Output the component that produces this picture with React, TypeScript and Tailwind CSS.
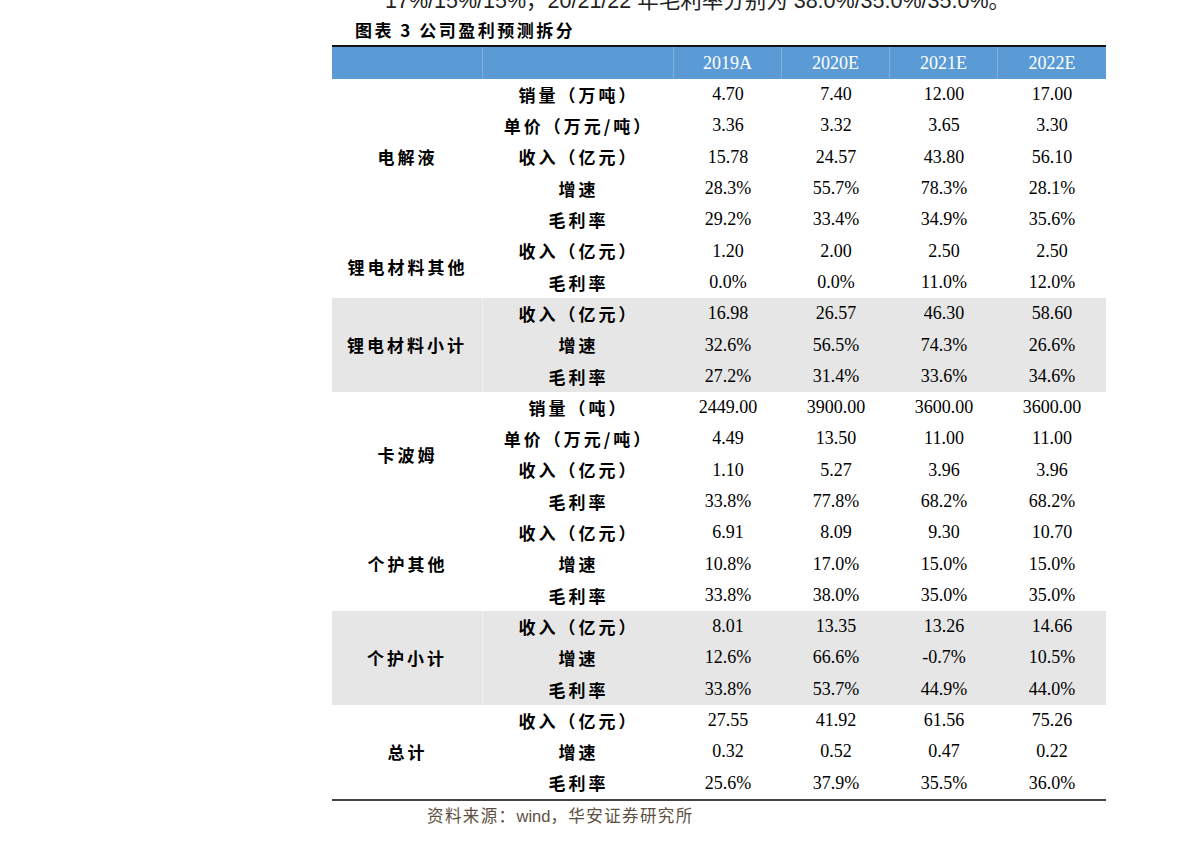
const cjk = "font-['Noto_Sans_CJK_SC',sans-serif]";
const serif = "font-['Liberation_Serif','Noto_Sans_CJK_SC',serif]";

type Row = [string, string, string, string, string];

const groups: { name: string; shaded?: boolean; rows: Row[] }[] = [
  {
    name: "电解液",
    rows: [
      ["销量（万吨）", "4.70", "7.40", "12.00", "17.00"],
      ["单价（万元/吨）", "3.36", "3.32", "3.65", "3.30"],
      ["收入（亿元）", "15.78", "24.57", "43.80", "56.10"],
      ["增速", "28.3%", "55.7%", "78.3%", "28.1%"],
      ["毛利率", "29.2%", "33.4%", "34.9%", "35.6%"],
    ],
  },
  {
    name: "锂电材料其他",
    rows: [
      ["收入（亿元）", "1.20", "2.00", "2.50", "2.50"],
      ["毛利率", "0.0%", "0.0%", "11.0%", "12.0%"],
    ],
  },
  {
    name: "锂电材料小计",
    shaded: true,
    rows: [
      ["收入（亿元）", "16.98", "26.57", "46.30", "58.60"],
      ["增速", "32.6%", "56.5%", "74.3%", "26.6%"],
      ["毛利率", "27.2%", "31.4%", "33.6%", "34.6%"],
    ],
  },
  {
    name: "卡波姆",
    rows: [
      ["销量（吨）", "2449.00", "3900.00", "3600.00", "3600.00"],
      ["单价（万元/吨）", "4.49", "13.50", "11.00", "11.00"],
      ["收入（亿元）", "1.10", "5.27", "3.96", "3.96"],
      ["毛利率", "33.8%", "77.8%", "68.2%", "68.2%"],
    ],
  },
  {
    name: "个护其他",
    rows: [
      ["收入（亿元）", "6.91", "8.09", "9.30", "10.70"],
      ["增速", "10.8%", "17.0%", "15.0%", "15.0%"],
      ["毛利率", "33.8%", "38.0%", "35.0%", "35.0%"],
    ],
  },
  {
    name: "个护小计",
    shaded: true,
    rows: [
      ["收入（亿元）", "8.01", "13.35", "13.26", "14.66"],
      ["增速", "12.6%", "66.6%", "-0.7%", "10.5%"],
      ["毛利率", "33.8%", "53.7%", "44.9%", "44.0%"],
    ],
  },
  {
    name: "总计",
    rows: [
      ["收入（亿元）", "27.55", "41.92", "61.56", "75.26"],
      ["增速", "0.32", "0.52", "0.47", "0.22"],
      ["毛利率", "25.6%", "37.9%", "35.5%", "36.0%"],
    ],
  },
];

const cols = "grid grid-cols-[191px_108px_108px_108px_108px]";

export default function App() {
  return (
    <div className="w-[1191px] h-[844px] bg-white overflow-hidden">
      {/* paragraph line cut off by the top edge */}
      <p className="mt-[-9px] ml-[385px] h-[20px] leading-[20px] text-[21.5px] text-[#222] font-['Liberation_Sans','Noto_Sans_CJK_SC',sans-serif] whitespace-nowrap">
        17%/15%/15%，20/21/22 年毛利率分别为 38.0%/35.0%/35.0%。
      </p>

      <div className="ml-[332px] w-[774px]">
        <h3 className={`mt-[8px] ml-[23px] h-[22px] leading-[22px] text-[17px] font-bold tracking-[2.5px] text-black ${cjk}`}>
          图表 3 公司盈利预测拆分
        </h3>

        {/* header */}
        <div className="mt-[4px] border-t-2 border-[#111] flex h-[34px] bg-[#5b9bd5] text-white">
          <div className="w-[151px] border-r border-[#7fb0de]" />
          <div className={`${cols} flex-1 items-center text-[18px] ${serif}`}>
            <div className="border-r border-[#7fb0de] h-full" />
            <div className="text-center border-r border-[#7fb0de] h-full leading-[32px]">2019A</div>
            <div className="text-center border-r border-[#7fb0de] h-full leading-[32px]">2020E</div>
            <div className="text-center border-r border-[#7fb0de] h-full leading-[32px]">2021E</div>
            <div className="text-center h-full leading-[32px]">2022E</div>
          </div>
        </div>

        {/* body */}
        {groups.map((g) => (
          <div key={g.name} className={`flex ${g.shaded ? "bg-[#e6e6e6]" : "bg-white"}`}>
            <div
              className={`w-[151px] flex items-center justify-center text-[17px] font-bold tracking-[3px] text-black ${cjk} ${
                g.shaded ? "border-r border-[#f2f2f2]" : ""
              }`}
            >
              {g.name}
            </div>
            <div className="flex-1 flex flex-col">
              {g.rows.map((r) => (
                <div key={r[0]} className={`${cols} h-[31.3px] items-center text-black`}>
                  <div className={`text-center text-[17px] font-bold tracking-[3px] ${cjk}`}>{r[0]}</div>
                  {r.slice(1).map((v, i) => (
                    <div key={i} className={`text-center text-[18px] ${serif}`}>
                      {v}
                    </div>
                  ))}
                </div>
              ))}
            </div>
          </div>
        ))}

        <div className="border-t-2 border-[#444]" />

        <p className={`mt-[3px] ml-[95px] text-[16.5px] tracking-[1.4px] leading-[22px] text-[#5c5040] ${cjk}`}>
          资料来源：<span className="font-['Liberation_Sans',sans-serif] tracking-normal">wind</span>，华安证券研究所
        </p>
      </div>
    </div>
  );
}
